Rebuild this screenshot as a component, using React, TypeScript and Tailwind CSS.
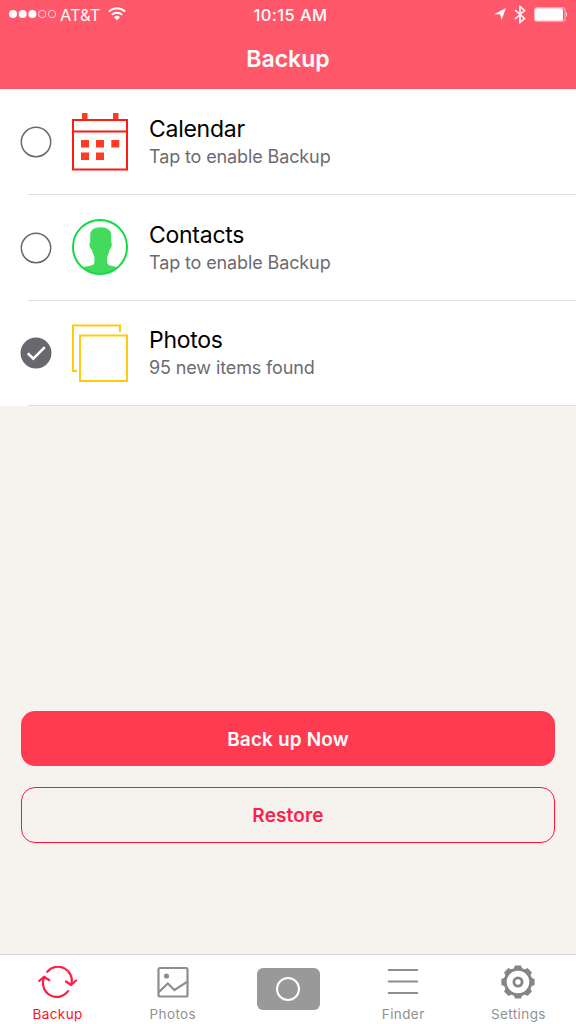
import type { ReactNode } from "react";
import clsx from "clsx";

function StatusBar() {
  return (
    <div className="flex h-7 items-center justify-between pr-2 pl-[9px] text-[16.5px] leading-none text-white">
      <div className="flex flex-1 items-center">
        <svg width="48" height="10" viewBox="0 0 48 10" fill="white">
          <circle cx="4" cy="5" r="4" />
          <circle cx="13.7" cy="5" r="4" />
          <circle cx="23.4" cy="5" r="4" />
          <g fill="none" stroke="white" strokeWidth="0.7">
            <circle cx="33.2" cy="5" r="3.7" />
            <circle cx="43" cy="5" r="3.7" />
          </g>
        </svg>
        <span className="ml-[3px] pt-0.5">AT&amp;T</span>
        <svg
          className="ml-2"
          width="18"
          height="14"
          viewBox="0 0 18 14"
          fill="none"
          stroke="white"
          strokeWidth="2"
        >
          <path d="M1 4.6 A11.5 11.5 0 0 1 17 4.6" />
          <path d="M3.9 7.7 A7.4 7.4 0 0 1 14.1 7.7" />
          <path
            d="M6 10.2 A4.4 4.4 0 0 1 12 10.2 L9 13.3 Z"
            fill="white"
            stroke="none"
          />
        </svg>
      </div>
      <span className="pt-0.5 pl-1 font-medium tracking-[0.4px]">10:15 AM</span>
      <div className="flex flex-1 items-center justify-end">
        <svg width="12" height="12" viewBox="0 0 12 12" fill="white">
          <path d="M12 0 L7.6 12 L6.2 6.4 L0 6.2 Z" />
        </svg>
        <svg
          className="ml-2"
          width="12"
          height="19"
          viewBox="0 0 12 19"
          fill="none"
          stroke="white"
          strokeWidth="1.6"
        >
          <path d="M1 5 L10.5 13.5 L6 17.5 V1.5 L10.5 5.5 L1 14" />
        </svg>
        <svg className="ml-2" width="34" height="15" viewBox="0 0 34 15">
          <rect
            x="0.5"
            y="0.8"
            width="30.5"
            height="13.4"
            rx="2"
            fill="none"
            stroke="white"
            strokeOpacity="0.6"
          />
          <rect x="1" y="1.3" width="28" height="12.4" rx="1.5" fill="white" />
          <path d="M32 5 q2 2.5 0 5 z" fill="white" />
        </svg>
      </div>
    </div>
  );
}

function CalendarIcon() {
  return (
    <svg width="56" height="58" viewBox="72 113 56 58" fill="#ff3b26">
      <rect x="82" y="113" width="5.5" height="7" />
      <rect x="113" y="113" width="5.5" height="7" />
      <path
        d="M73 120 H127 V169.5 H73 Z M73 131.5 H127"
        fill="none"
        stroke="#ff1a14"
        strokeWidth="2"
      />
      <rect x="81" y="140" width="8" height="7.5" />
      <rect x="96" y="140" width="8" height="7.5" />
      <rect x="111.3" y="140" width="8" height="7.5" />
      <rect x="81" y="152.5" width="8" height="7.5" />
      <rect x="96" y="152.5" width="8" height="7.5" />
    </svg>
  );
}

function ContactsIcon() {
  return (
    <svg width="56" height="58" viewBox="72 219 56 58">
      <path
        d="M82 267.5 Q86 266.2 90 265.8 Q94.4 265.2 94.4 262 V256.5 Q92.6 253.5 91.8 249.5 Q89.5 248.500 89.4 243.5 L90.2 242 V235 Q90.3 227.3 100.5 227.3 Q111 227.3 111.1 235 V242 L111.8 243.5 Q111.700 248.5 109.7 249.5 Q109 253.5 107.2 256.5 V262 Q107.2 265.2 111 265.8 Q115 266.2 118 267.5 A27.5 27.5 0 0 1 82 267.5 Z"
        fill="#43db5e"
      />
      <circle
        cx="100"
        cy="247"
        r="27"
        fill="none"
        stroke="#0fdc3f"
        strokeWidth="2"
      />
    </svg>
  );
}

function PhotosIcon() {
  return (
    <svg
      width="56"
      height="58"
      viewBox="72 324 56 58"
      fill="none"
      stroke="#ffcc0d"
      strokeWidth="2"
    >
      <path d="M120 332 V325.5 H73 V371 H77" />
      <path d="M80 335.5 H127 V381 H80 Z" />
    </svg>
  );
}

function RadioMark({ checked }: { checked: boolean }) {
  return (
    <svg
      width="32"
      height="32"
      viewBox="0 0 32 32"
      fill={checked ? "#68686f" : "none"}
      stroke="#68686f"
      strokeWidth="1.5"
    >
      <circle cx="16" cy="16" r="14.7" />
      {checked && (
        <path
          d="M7.8 16.2 L13.3 21.6 L24.8 10.2"
          fill="none"
          stroke="white"
          strokeWidth="2.6"
        />
      )}
    </svg>
  );
}

interface BackupRowProps {
  icon: ReactNode;
  title: string;
  subtitle: string;
  checked?: boolean;
  className?: string;
}

function BackupRow({
  icon,
  title,
  subtitle,
  checked = false,
  className,
}: BackupRowProps) {
  return (
    <div className={clsx("flex flex-col bg-white pl-5", className)}>
      <div className="flex flex-1 items-center">
        <RadioMark checked={checked} />
        <div className="ml-5">{icon}</div>
        <div className="ml-[21px] pt-0.5">
          <h2 className="text-[23px] leading-7 tracking-[-0.27px] text-black">
            {title}
          </h2>
          <p className="text-[18px] leading-7 tracking-[-0.12px] text-[#6b6b72]">
            {subtitle}
          </p>
        </div>
      </div>
      <div className="ml-2 h-px bg-[#dddddf]" />
    </div>
  );
}

function BackupTabIcon() {
  return (
    <svg
      width="40"
      height="32"
      viewBox="38 966 40 32"
      fill="none"
      stroke="#ff1f44"
      strokeWidth="2.2"
      strokeLinecap="round"
      strokeLinejoin="round"
    >
      <path d="M47.3 971.8 A13.8 13.8 0 0 1 71.2 984.5" />
      <path d="M66 981.5 L71 985 L76 980.5" />
      <path d="M44.2 977.5 A13.8 13.8 0 0 0 68 991.2" />
      <path d="M39.2 981 L44 976.8 L49.3 980.2" />
    </svg>
  );
}

function PhotosTabIcon() {
  return (
    <svg
      width="32"
      height="32"
      viewBox="157 966 32 32"
      fill="none"
      stroke="#8e8e8e"
      strokeWidth="2.2"
    >
      <rect x="158.5" y="968" width="29" height="28.5" rx="1.5" />
      <path d="M159 992 L167.8 983.5 L174.5 990 L187 981.8" />
      <circle cx="166.5" cy="976" r="2.6" fill="#8e8e8e" stroke="none" />
    </svg>
  );
}

function FinderTabIcon() {
  return (
    <svg
      width="32"
      height="32"
      viewBox="0 0 32 32"
      stroke="#8e8e8e"
      strokeWidth="2.2"
      strokeLinecap="round"
    >
      <path d="M1.8 4 H30.2 M1.8 15.5 H30.2 M1.8 27 H30.2" />
    </svg>
  );
}

function SettingsTabIcon() {
  const teeth = [0, 45, 90, 135, 180, 225, 270, 315];
  return (
    <svg
      width="34"
      height="34"
      viewBox="-17 -17 34 34"
      fill="none"
      stroke="#858585"
    >
      <circle r="12.8" strokeWidth="3" />
      <circle r="4.1" strokeWidth="2.8" />
      {teeth.map((angle) => (
        <path
          key={angle}
          d="M-4.4 -12.5 L-3.1 -16.6 H3.1 L4.4 -12.5 Z"
          fill="#858585"
          stroke="none"
          transform={`rotate(${angle})`}
        />
      ))}
    </svg>
  );
}

function Tab({
  icon,
  label,
  active = false,
}: {
  icon: ReactNode;
  label: string;
  active?: boolean;
}) {
  return (
    <div className="flex flex-1 flex-col items-center pt-[11px]">
      <div className="flex h-8 items-center">{icon}</div>
      <span
        className={clsx(
          "mt-1.5 text-[13.5px] leading-5 tracking-[0.4px]",
          active ? "text-[#ff0f2b]" : "text-[#919191]",
        )}
      >
        {label}
      </span>
    </div>
  );
}

export default function App() {
  return (
    <div className="flex h-[1024px] w-[576px] flex-col overflow-hidden bg-[#f6f3ee] font-['Inter',sans-serif]">
      <header className="h-[89px] bg-[#ff586a]">
        <StatusBar />
        <h1 className="mt-4 text-center text-[23px] leading-[30px] font-[560] text-white">
          Backup
        </h1>
      </header>

      <main className="flex flex-1 flex-col">
        <BackupRow
          className="h-[106px]"
          icon={<CalendarIcon />}
          title="Calendar"
          subtitle="Tap to enable Backup"
        />
        <BackupRow
          className="h-[106px]"
          icon={<ContactsIcon />}
          title="Contacts"
          subtitle="Tap to enable Backup"
        />
        <BackupRow
          className="h-[105px]"
          icon={<PhotosIcon />}
          title="Photos"
          subtitle="95 new items found"
          checked
        />

        <div className="mt-auto mb-[111px] flex flex-col gap-[21px] px-[21px] text-[19px] font-[560] tracking-[0.15px]">
          <button className="h-[55px] rounded-[14px] bg-[#ff3b51] pt-[3px] text-white">
            Back up Now
          </button>
          <button className="h-14 rounded-[14px] border border-[#ff1540] pt-0.5 text-[#ff1f48]">
            Restore
          </button>
        </div>
      </main>

      <nav className="flex h-[70px] border-t border-[#d9d8d5] bg-white">
        <Tab icon={<BackupTabIcon />} label="Backup" active />
        <Tab icon={<PhotosTabIcon />} label="Photos" />
        <div className="flex flex-1 justify-center pt-[13px]">
          <div className="flex h-[42px] w-[63px] items-center justify-center rounded-md bg-[#999999]">
            <div className="size-6 rounded-full border-2 border-white" />
          </div>
        </div>
        <Tab icon={<FinderTabIcon />} label="Finder" />
        <Tab icon={<SettingsTabIcon />} label="Settings" />
      </nav>
    </div>
  );
}
